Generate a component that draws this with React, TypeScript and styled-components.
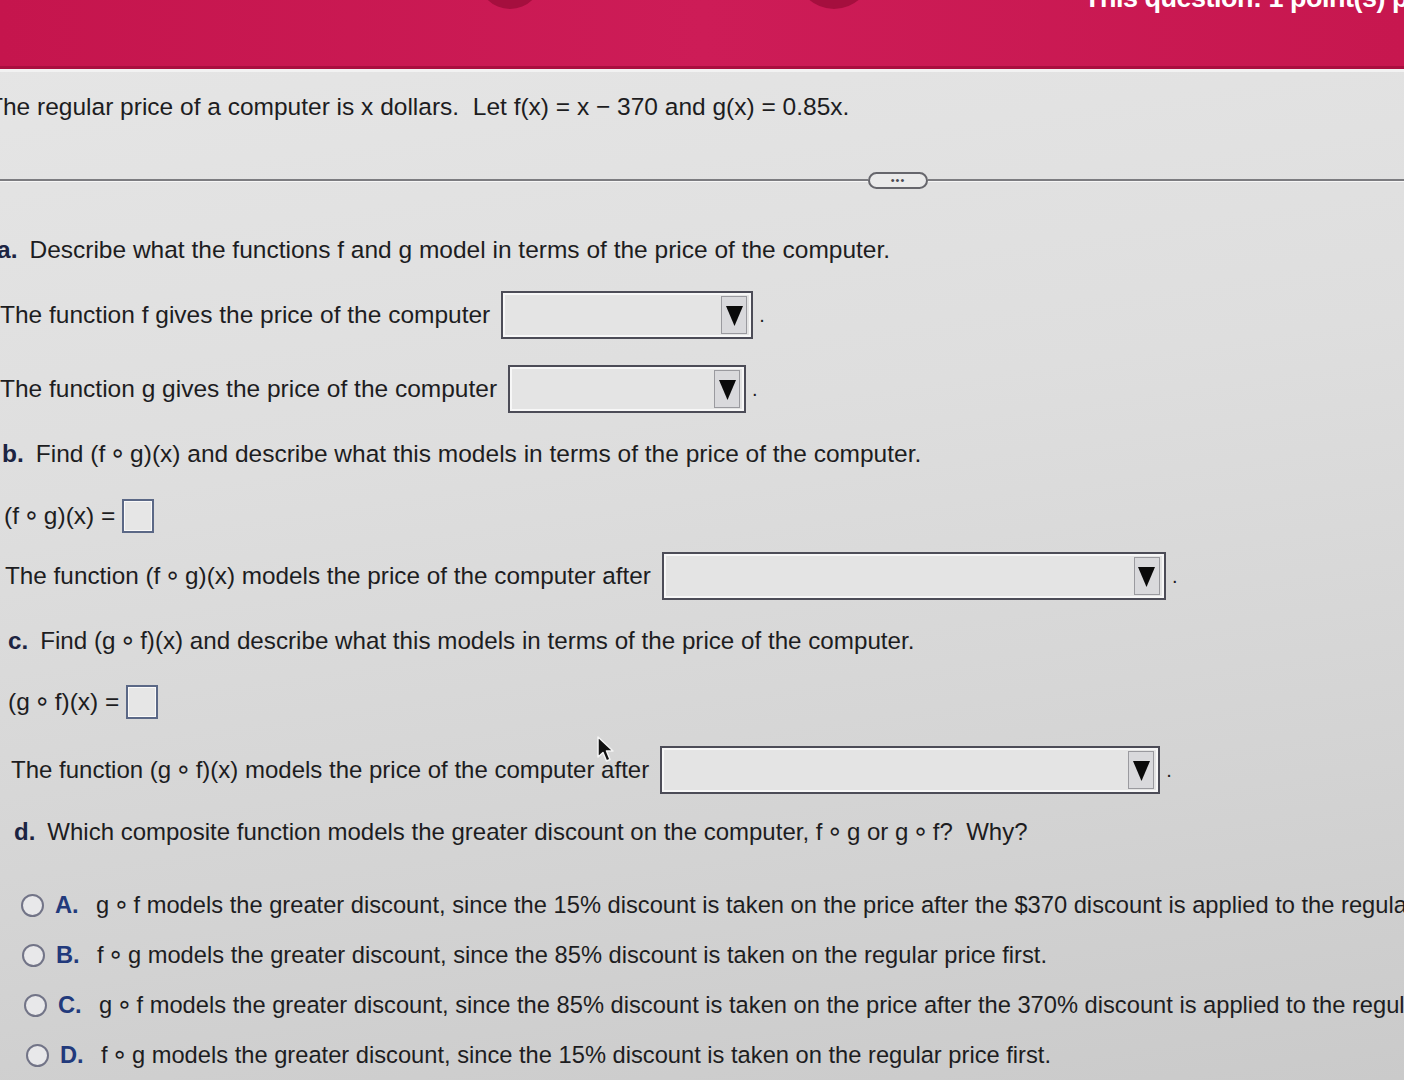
import React from "react";
import styled, { createGlobalStyle } from "styled-components";

const Global = createGlobalStyle`
  html, body { margin: 0; padding: 0; }
  body {
    width: 1404px; height: 1080px; overflow: hidden;
    font-family: "Liberation Sans", Arial, "DejaVu Sans", sans-serif;
    background: #dcdcdc;
  }
`;

const Page = styled.div`
  position: relative;
  width: 1404px;
  height: 1080px;
  overflow: hidden;
  display: flex;
  flex-direction: column;
  background: linear-gradient(172deg, #e6e6e6 0%, #dedede 40%, #d3d3d3 75%, #cacaca 100%);
  color: #1d1d1f;
`;

const Header = styled.header`
  flex: none;
  height: 69px;
  display: flex;
  align-items: flex-start;
  overflow: hidden;
  background: linear-gradient(90deg, #c5154d 0%, #cd1c57 50%, #c7174f 100%);
  box-shadow: inset 0 -3px 0 #a90f3f;
  border-bottom: 3px solid #f2f2f2;
`;

const NavDot = styled.div<{ $left: number; $size: number }>`
  flex: none;
  margin-left: ${(p) => p.$left}px;
  margin-top: ${(p) => -p.$size + 9}px;
  width: ${(p) => p.$size}px;
  height: ${(p) => p.$size}px;
  border-radius: 50%;
  background: #a50f3e;
`;

const HeaderTitle = styled.div`
  flex: none;
  margin-left: 212px;
  margin-top: -17px;
  white-space: nowrap;
  color: #ffffff;
  font-weight: 700;
  font-size: 27px;
  letter-spacing: -0.5px;
`;

const Row = styled.div<{ $top: number; $indent: number; $size?: number }>`
  flex: none;
  height: 50px;
  display: flex;
  align-items: center;
  margin-top: ${(p) => p.$top}px;
  margin-left: ${(p) => p.$indent}px;
  white-space: nowrap;
  font-size: ${(p) => p.$size ?? 24.5}px;
`;

const PartLabel = styled.span`
  font-weight: 700;
  color: #1c2442;
  margin-right: 12px;
`;

const Compose = styled.span`
  display: inline-block;
  font-family: "DejaVu Sans", sans-serif;
  font-size: 1.1em;
  line-height: 1;
  margin: 0 4px;
  transform: translateY(-1px);
`;

const SepLine = styled.div<{ $width?: number }>`
  height: 0;
  border-top: 2px solid #7c7c80;
  box-shadow: 0 1px 0 #f6f6f6;
  ${(p) => (p.$width ? `width: ${p.$width}px; flex: none;` : `flex: 1;`)}
`;

const Pill = styled.div`
  flex: none;
  width: 56px;
  height: 13px;
  border: 2px solid #66666c;
  border-radius: 9px;
  background: #eaeaea;
  display: flex;
  align-items: center;
  justify-content: center;
  font-size: 11px;
  letter-spacing: 1px;
  color: #4a4a52;
  line-height: 1;
`;

const Select = styled.div<{ $width: number }>`
  flex: none;
  margin-left: 11px;
  width: ${(p) => p.$width}px;
  height: 48px;
  box-sizing: border-box;
  border: 2px solid #4c4c57;
  box-shadow: inset 0 0 0 2px #f7f7f7;
  background: #e4e4e4;
  display: flex;
  align-items: center;
  justify-content: flex-end;
  padding-right: 4px;
`;

const ArrowButton = styled.div`
  width: 26px;
  height: 38px;
  box-sizing: border-box;
  border: 1px solid #9a9a9f;
  background: #d9d9dc;
  display: flex;
  align-items: center;
  justify-content: center;
`;

const Period = styled.span`
  margin-left: 6px;
  font-size: 20px;
`;

const AnswerBox = styled.div`
  flex: none;
  margin-left: 7px;
  width: 32px;
  height: 34px;
  box-sizing: border-box;
  border: 2px solid #5b6886;
  box-shadow: inset 0 0 0 1px #fafafa;
  background: #e6e6e6;
`;

const Radio = styled.span`
  flex: none;
  width: 23px;
  height: 23px;
  box-sizing: border-box;
  border-radius: 50%;
  border: 2px solid #727487;
  background: #e8e8ea;
  margin-right: 11px;
`;

const OptionLetter = styled.span`
  flex: none;
  width: 41px;
  font-weight: 700;
  color: #223a7c;
`;

const Cursor = styled.svg`
  position: absolute;
  left: 596px;
  top: 736px;
`;

const Triangle = () => (
  <svg width="17" height="21" viewBox="0 0 17 21">
    <polygon points="0,1 17,1 8.5,21" fill="#0a0a0a" />
  </svg>
);

const Dropdown = ({ width }: { width: number }) => (
  <>
    <Select $width={width}>
      <ArrowButton>
        <Triangle />
      </ArrowButton>
    </Select>
    <Period>.</Period>
  </>
);

const C = () => <Compose>∘</Compose>;

const options: { l: string; a: string; b: string; rest: string; top: number; indent: number }[] = [
  {
    l: "A.",
    a: "g",
    b: "f",
    rest: " models the greater discount, since the 15% discount is taken on the price after the $370 discount is applied to the regular price.",
    top: 23,
    indent: 21,
  },
  {
    l: "B.",
    a: "f",
    b: "g",
    rest: " models the greater discount, since the 85% discount is taken on the regular price first.",
    top: 0,
    indent: 22,
  },
  {
    l: "C.",
    a: "g",
    b: "f",
    rest: " models the greater discount, since the 85% discount is taken on the price after the 370% discount is applied to the regular price.",
    top: 0,
    indent: 24,
  },
  {
    l: "D.",
    a: "f",
    b: "g",
    rest: " models the greater discount, since the 15% discount is taken on the regular price first.",
    top: 0,
    indent: 26,
  },
];

export default function App() {
  return (
    <Page>
      <Global />
      <Header>
        <NavDot $left={478} $size={64} />
        <NavDot $left={254} $size={76} />
        <HeaderTitle>This question: 1 point(s) possible</HeaderTitle>
      </Header>

      <Row $top={10} $indent={-12}>
        The regular price of a computer is x dollars.&nbsp; Let f(x) = x − 370 and g(x) = 0.85x.
      </Row>

      <Row $top={23} $indent={0}>
        <SepLine $width={868} />
        <Pill>•••</Pill>
        <SepLine />
      </Row>

      <Row $top={20} $indent={-3}>
        <PartLabel>a.</PartLabel>
        Describe what the functions f and g model in terms of the price of the computer.
      </Row>

      <Row $top={15} $indent={0}>
        The function f gives the price of the computer
        <Dropdown width={252} />
      </Row>

      <Row $top={24} $indent={0}>
        The function g gives the price of the computer
        <Dropdown width={238} />
      </Row>

      <Row $top={15} $indent={2}>
        <PartLabel>b.</PartLabel>
        Find (f<C />g)(x) and describe what this models in terms of the price of the computer.
      </Row>

      <Row $top={12} $indent={4}>
        (f<C />g)(x) =
        <AnswerBox />
      </Row>

      <Row $top={10} $indent={5} $size={24.3}>
        The function (f<C />g)(x) models the price of the computer after
        <Dropdown width={504} />
      </Row>

      <Row $top={15} $indent={8} $size={24.2}>
        <PartLabel>c.</PartLabel>
        Find (g<C />f)(x) and describe what this models in terms of the price of the computer.
      </Row>

      <Row $top={11} $indent={8}>
        (g<C />f)(x) =
        <AnswerBox />
      </Row>

      <Row $top={18} $indent={11} $size={24}>
        The function (g<C />f)(x) models the price of the computer after
        <Dropdown width={500} />
      </Row>

      <Row $top={12} $indent={14} $size={24}>
        <PartLabel>d.</PartLabel>
        Which composite function models the greater discount on the computer, f<C />g or g<C />f?&nbsp; Why?
      </Row>

      {options.map((o) => (
        <Row key={o.l} $top={o.top} $indent={o.indent} $size={23.7}>
          <Radio />
          <OptionLetter>{o.l}</OptionLetter>
          {o.a}
          <C />
          {o.b}
          {o.rest}
        </Row>
      ))}

      <Cursor width="20" height="28" viewBox="0 0 20 28">
        <path d="M2 1 L2 21 L7 16.5 L10.5 25 L14 23.5 L10.5 15 L17 15 Z" fill="#111" stroke="#f4f4f4" strokeWidth="1.5" strokeLinejoin="round" />
      </Cursor>
    </Page>
  );
}
